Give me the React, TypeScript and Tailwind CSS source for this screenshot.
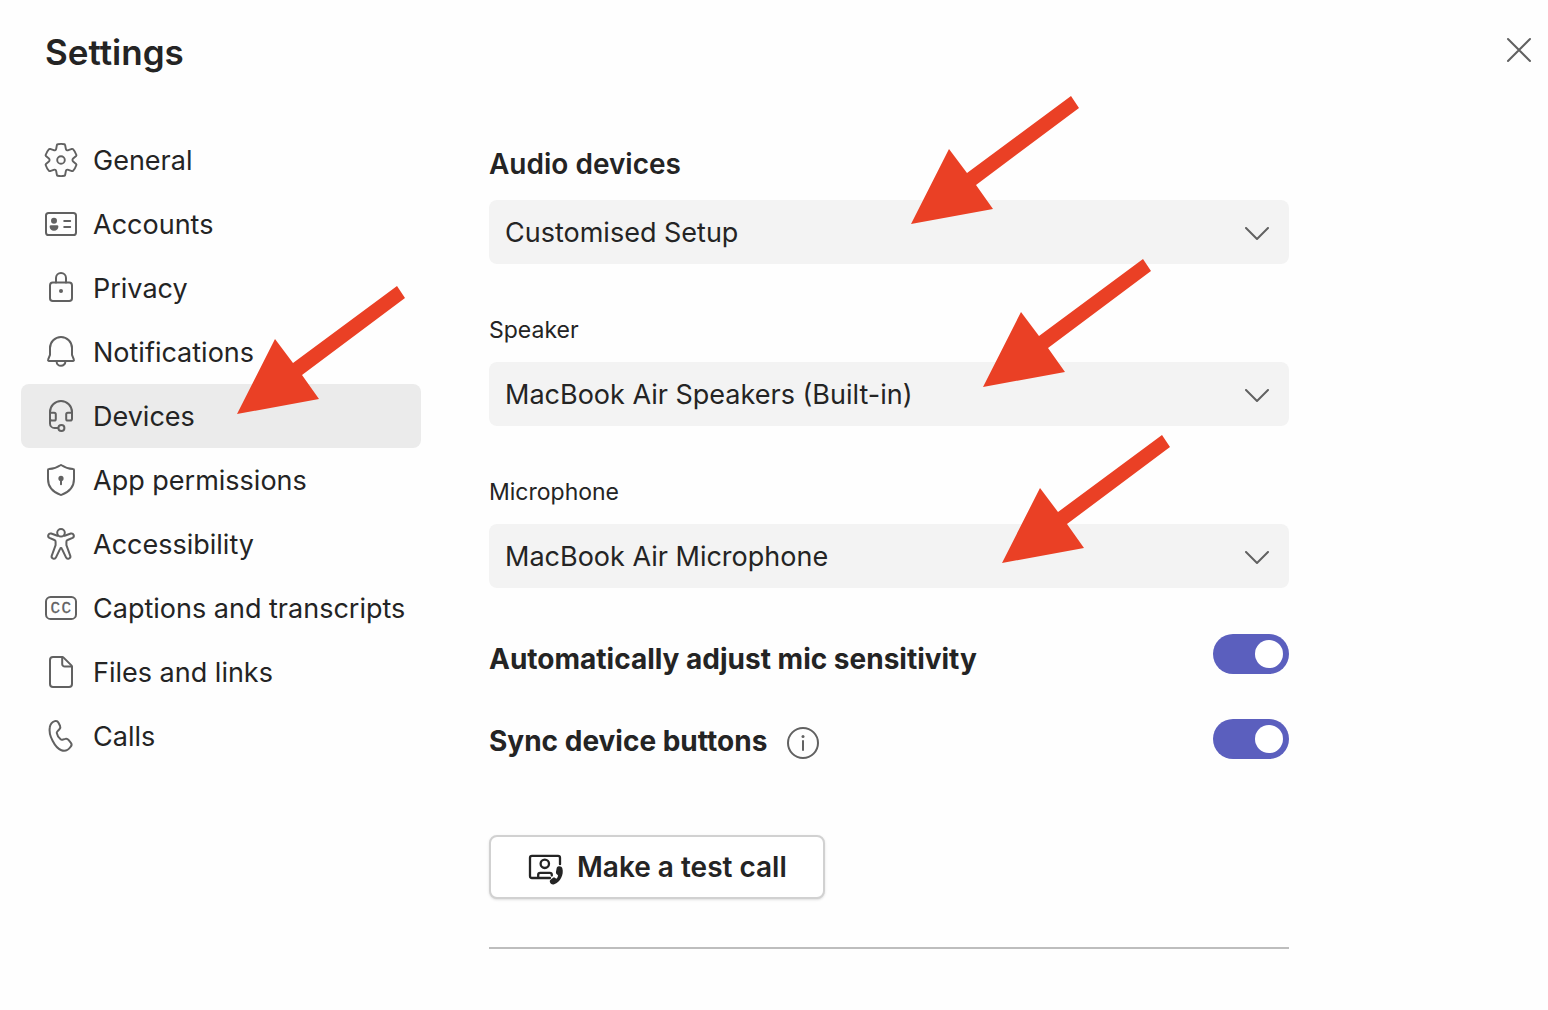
import React, { useState } from 'react';

type IconProps = { className?: string };

interface NavItem {
  id: string;
  label: string;
  icon: React.FC<IconProps>;
}

const Icon: React.FC<{ children: React.ReactNode; className?: string }> = ({ children, className }) => (
  <svg
    viewBox="0 0 20 20"
    fill="none"
    stroke="currentColor"
    strokeWidth="1"
    strokeLinecap="round"
    strokeLinejoin="round"
    aria-hidden="true"
    className={className ?? 'size-10 shrink-0 text-[#616161]'}
  >
    {children}
  </svg>
);

const GearIcon: React.FC<IconProps> = ({ className }) => (
  <Icon className={className}>
    <g transform="translate(10 10) scale(0.95) translate(-10 -10)">
      <path d="M1.91 7.38A8.5 8.5 0 0 1 3.7 4.3a.5.5 0 0 1 .54-.13l1.92.68a1 1 0 0 0 1.32-.76l.36-2a.5.5 0 0 1 .4-.4 8.53 8.53 0 0 1 3.55 0c.2.04.35.2.38.4l.37 2a1 1 0 0 0 1.32.76l1.92-.68a.5.5 0 0 1 .54.13 8.5 8.5 0 0 1 1.78 3.08c.06.2 0 .4-.15.54l-1.56 1.32a1 1 0 0 0 0 1.52l1.56 1.32a.5.5 0 0 1 .15.54 8.5 8.5 0 0 1-1.78 3.08.5.5 0 0 1-.54.13l-1.92-.68a1 1 0 0 0-1.32.76l-.37 2a.5.5 0 0 1-.38.4 8.53 8.53 0 0 1-3.56 0 .5.5 0 0 1-.39-.4l-.36-2a1 1 0 0 0-1.32-.76l-1.92.68a.5.5 0 0 1-.54-.13 8.5 8.5 0 0 1-1.78-3.08.5.5 0 0 1 .15-.54l1.56-1.32a1 1 0 0 0 0-1.52L2.06 7.92a.5.5 0 0 1-.15-.54Z" />
      <circle cx="10" cy="10" r="2" />
    </g>
  </Icon>
);

const AccountsIcon: React.FC<IconProps> = ({ className }) => (
  <Icon className={className}>
    <rect x="2.5" y="4.5" width="15" height="11" rx="1.3" />
    <circle cx="6.5" cy="8.4" r="1.5" fill="currentColor" stroke="none" />
    <path d="M5 10.6h3a.7.7 0 0 1 .7.7c0 1.3-.9 2.1-2.2 2.1s-2.2-.8-2.2-2.1a.7.7 0 0 1 .7-.7Z" fill="currentColor" stroke="none" />
    <path d="M11.6 8.5h3M11.6 11.5h3" />
  </Icon>
);

const LockIcon: React.FC<IconProps> = ({ className }) => (
  <Icon className={className}>
    <rect x="4.5" y="7.3" width="11" height="9.2" rx="1.4" />
    <path d="M7.5 7.2V5a2.5 2.5 0 0 1 5 0v2.2" />
    <circle cx="10" cy="11.5" r="1" fill="currentColor" stroke="none" />
  </Icon>
);

const BellIcon: React.FC<IconProps> = ({ className }) => (
  <Icon className={className}>
    <path d="M10 2.5A5.5 5.5 0 0 0 4.5 8v3.4l-.95 2.4a.5.5 0 0 0 .46.7h11.98a.5.5 0 0 0 .46-.7l-.95-2.4V8A5.5 5.5 0 0 0 10 2.5Z" />
    <path d="M7.8 14.7a2.2 2.2 0 0 0 4.4 0" />
  </Icon>
);

const HeadsetIcon: React.FC<IconProps> = ({ className }) => (
  <Icon className={className}>
    <path d="M4.5 8.5V8a5.5 5.5 0 0 1 11 0v.5" />
    <path d="M4.5 8.4h2.1a.8.8 0 0 1 .8.8v2.3a.8.8 0 0 1-.8.8H5.4a.9.9 0 0 1-.9-.9Z" />
    <path d="M15.5 8.4h-2.1a.8.8 0 0 0-.8.8v2.3a.8.8 0 0 0 .8.8h1.2a.9.9 0 0 0 .9-.9Z" />
    <path d="M4.5 11.4v2.3A2.3 2.3 0 0 0 6.8 16h1.8" />
    <circle cx="10.2" cy="16" r="1.5" />
  </Icon>
);

const ShieldIcon: React.FC<IconProps> = ({ className }) => (
  <Icon className={className}>
    <path d="M9.7 2.6a.5.5 0 0 1 .6 0c1.7 1.2 3.6 1.8 5.7 1.95a.5.5 0 0 1 .5.5V9.5c0 3.8-2.1 6.4-6.3 7.95a.6.6 0 0 1-.4 0C5.6 15.9 3.5 13.3 3.5 9.5V5.05a.5.5 0 0 1 .5-.5c2.1-.15 4-.75 5.7-1.95Z" />
    <circle cx="10" cy="9.2" r="1.3" fill="currentColor" stroke="none" />
    <path d="M10 9.5v2.6" />
  </Icon>
);

const AccessibilityIcon: React.FC<IconProps> = ({ className }) => (
  <Icon className={className}>
    <circle cx="10" cy="4.4" r="1.9" />
    <path d="M8.2 5.9 5.1 4.75a1.2 1.2 0 0 0-.9 2.2L6.7 8c.4.15.6.5.6.9v1.7l-1.95 5.3a1.15 1.15 0 0 0 2.15.8l2.1-4.4c.15-.35.65-.35.8 0l2.1 4.4a1.15 1.15 0 0 0 2.15-.8L12.7 10.6V8.9c0-.4.2-.75.6-.9l2.5-1.05a1.2 1.2 0 0 0-.9-2.2L11.8 5.9" />
  </Icon>
);

const CaptionsIcon: React.FC<IconProps> = ({ className }) => (
  <Icon className={className}>
    <rect x="2.5" y="4.5" width="15" height="11" rx="2.3" />
    <text
      x="4.7 10.2"
      y="12.7"
      fontSize="8"
      fill="currentColor"
      strokeWidth="0.15"
      fontFamily='"Liberation Mono", monospace'
    >
      CC
    </text>
  </Icon>
);

const FileIcon: React.FC<IconProps> = ({ className }) => (
  <Icon className={className}>
    <path d="M6 2.5h4.6a1 1 0 0 1 .7.3l3.9 3.9a1 1 0 0 1 .3.7V16a1.5 1.5 0 0 1-1.5 1.5H6A1.5 1.5 0 0 1 4.5 16V4A1.5 1.5 0 0 1 6 2.5Z" />
    <path d="M10.6 2.6V6a1.3 1.3 0 0 0 1.3 1.3h3.5" />
  </Icon>
);

const PhoneIcon: React.FC<IconProps> = ({ className }) => (
  <Icon className={className}>
    <path d="M6.9 2.55c.8-.2 1.5.1 1.85.8l.75 1.5c.3.65.2 1.3-.3 1.8L8.1 7.8c-.2.2-.25.45-.2.75.2 1.1.9 2.3 1.9 3.1.25.2.55.3.85.2l1.5-.4c.6-.2 1.2 0 1.6.5l1.2 1.45c.45.55.4 1.3-.05 1.85-1.1 1.6-2.8 2.6-4.7 1.9-1.6-.6-3.2-2.4-4.4-4.75C4.6 10.1 4 7.6 4.4 5.6c.25-1.6 1.1-2.6 2.5-3.05Z" />
  </Icon>
);

const InfoIcon: React.FC = () => (
  <svg viewBox="2 2 16 16" fill="none" stroke="currentColor" aria-hidden="true" className="size-8 text-[#616161]">
    <circle cx="10" cy="10" r="7.5" />
    <path d="M10 9v4.5" strokeLinecap="round" />
    <circle cx="10" cy="6.8" r="0.75" fill="currentColor" stroke="none" />
  </svg>
);

const TestCallIcon: React.FC = () => (
  <Icon className="size-10 shrink-0 text-[#242424]">
    <g strokeWidth="1.15">
      <path d="M17.5 8.6V5.4a1 1 0 0 0-1-1h-13a1 1 0 0 0-1 1v9.1a1 1 0 0 0 1 1h9" />
      <circle cx="9.9" cy="8.4" r="2.1" />
      <path d="M6.6 15.3v-1.4a1 1 0 0 1 1-1h4.8a1 1 0 0 1 1 1v.4" />
    </g>
    <path
      d="M16.5 9.8c.9-.4 1.9-.1 2.2.9.8 3.1-1 6.7-4.1 7.9-.9.3-1.6 0-2-.7-.4-.7-.2-1.4.4-1.8l.9-.6c.4-.3.8-.3 1.2 0l.6.4c.5-.5.8-1.1.8-1.8l-.6-.5c-.4-.3-.5-.7-.4-1.2l.3-1.6c.1-.5.3-.8.7-1Z"
      fill="currentColor"
      stroke="none"
    />
  </Icon>
);

const Arrow: React.FC<{ className: string }> = ({ className }) => (
  <svg
    width="169"
    height="129"
    viewBox="0 0 169 129"
    aria-hidden="true"
    className={`pointer-events-none absolute z-10 text-[#ea4025] ${className}`}
  >
    <path d="M0 128 38 53 56 77 160 0 168 12 65 89 82 113Z" fill="currentColor" />
  </svg>
);

const navItems: NavItem[] = [
  { id: 'general', label: 'General', icon: GearIcon },
  { id: 'accounts', label: 'Accounts', icon: AccountsIcon },
  { id: 'privacy', label: 'Privacy', icon: LockIcon },
  { id: 'notifications', label: 'Notifications', icon: BellIcon },
  { id: 'devices', label: 'Devices', icon: HeadsetIcon },
  { id: 'permissions', label: 'App permissions', icon: ShieldIcon },
  { id: 'accessibility', label: 'Accessibility', icon: AccessibilityIcon },
  { id: 'captions', label: 'Captions and transcripts', icon: CaptionsIcon },
  { id: 'files', label: 'Files and links', icon: FileIcon },
  { id: 'calls', label: 'Calls', icon: PhoneIcon },
];

interface DeviceSelectProps {
  id: string;
  value: string;
  arrowClass: string;
}

const DeviceSelect: React.FC<DeviceSelectProps> = ({ id, value, arrowClass }) => (
  <div className="relative">
    <select
      id={id}
      defaultValue={value}
      className="h-16 w-full appearance-none rounded-lg bg-[#f3f3f3] pl-4 pr-16 pt-[2px] text-[27px] text-[#242424]"
    >
      <option value={value}>{value}</option>
    </select>
    <svg
      viewBox="0 0 24 14"
      fill="none"
      stroke="currentColor"
      strokeWidth="2"
      strokeLinecap="round"
      strokeLinejoin="round"
      aria-hidden="true"
      className="pointer-events-none absolute right-5 top-[27px] h-[14px] w-6 text-[#616161]"
    >
      <path d="M1 1l11 11L23 1" />
    </svg>
    <Arrow className={arrowClass} />
  </div>
);

interface ToggleProps {
  id: string;
  checked: boolean;
  onChange: (checked: boolean) => void;
}

const Toggle: React.FC<ToggleProps> = ({ id, checked, onChange }) => (
  <input
    id={id}
    type="checkbox"
    role="switch"
    checked={checked}
    onChange={(e) => onChange(e.target.checked)}
    className="flex h-10 w-[76px] shrink-0 appearance-none items-center rounded-full bg-gray-400 px-[6px] before:size-7 before:rounded-full before:bg-white checked:justify-end checked:bg-[#5b5fbe]"
  />
);

const App: React.FC = () => {
  const [activeItem, setActiveItem] = useState('devices');
  const [autoAdjust, setAutoAdjust] = useState(true);
  const [syncButtons, setSyncButtons] = useState(true);

  return (
    <div className="min-h-screen bg-[#fefefe] font-['Inter',sans-serif] text-[#242424]">
      {/* Header */}
      <header className="flex h-32 items-start justify-between pl-[45px] pr-4 pt-7">
        <h1 className="text-[35px] font-semibold leading-[48px]">Settings</h1>
        <button type="button" aria-label="Close" className="flex h-11 items-center text-[#616161]">
          <svg viewBox="0 0 26 26" fill="none" stroke="currentColor" strokeWidth="2" strokeLinecap="round" className="size-[26px]">
            <path d="M2 2l22 22M24 2L2 24" />
          </svg>
        </button>
      </header>

      <div className="flex gap-[68px] pl-[21px] pr-4">
        {/* Sidebar */}
        <nav className="w-[400px] shrink-0">
          <ul>
            {navItems.map(({ id, label, icon: ItemIcon }) => (
              <li key={id} className="relative">
                <button
                  type="button"
                  onClick={() => setActiveItem(id)}
                  aria-current={activeItem === id ? 'page' : undefined}
                  className={`flex h-16 w-full items-center gap-3 whitespace-nowrap rounded-lg pl-5 text-left text-[27px] leading-[41px] ${
                    activeItem === id ? 'bg-[#ebebeb]' : ''
                  }`}
                >
                  <ItemIcon />
                  <span>{label}</span>
                </button>
                {id === 'devices' && <Arrow className="-top-[98px] left-[216px]" />}
              </li>
            ))}
          </ul>
        </nav>

        {/* Device settings */}
        <main className="min-w-0 max-w-[800px] flex-1 pt-[18px]">
          <section className="flex flex-col gap-[50px]">
            <div>
              <label htmlFor="audio-devices" className="mb-[18px] block text-[28px] font-semibold leading-9">
                Audio devices
              </label>
              <DeviceSelect id="audio-devices" value="Customised Setup" arrowClass="-top-[104px] left-[422px]" />
            </div>
            <div>
              <label htmlFor="speaker" className="mb-4 block text-[23px] leading-8">
                Speaker
              </label>
              <DeviceSelect id="speaker" value="MacBook Air Speakers (Built-in)" arrowClass="-top-[103px] left-[494px]" />
            </div>
            <div>
              <label htmlFor="microphone" className="mb-4 block text-[23px] leading-8">
                Microphone
              </label>
              <DeviceSelect id="microphone" value="MacBook Air Microphone" arrowClass="-top-[89px] left-[513px]" />
            </div>
          </section>

          <section className="mt-[46px] flex flex-col gap-[42px]">
            <div className="flex items-start justify-between">
              <label htmlFor="auto-adjust" className="pt-[7px] text-[28px] font-bold leading-9">
                Automatically adjust mic sensitivity
              </label>
              <Toggle id="auto-adjust" checked={autoAdjust} onChange={setAutoAdjust} />
            </div>
            <div className="flex items-end justify-between">
              <div className="flex items-end gap-5">
                <label htmlFor="sync-buttons" className="text-[28px] font-bold leading-9">
                  Sync device buttons
                </label>
                <button type="button" aria-label="About syncing device buttons">
                  <InfoIcon />
                </button>
              </div>
              <Toggle id="sync-buttons" checked={syncButtons} onChange={setSyncButtons} />
            </div>
          </section>

          <button
            type="button"
            className="mt-[76px] flex h-16 items-center gap-3 rounded-lg border-2 border-[#d1d1d1] bg-white pl-[34px] pr-9 text-[28px] font-semibold shadow-sm"
          >
            <TestCallIcon />
            Make a test call
          </button>

          <hr className="mt-12 border-t-2 border-[#bdbdbd]" />
        </main>
      </div>
    </div>
  );
};

export default App;
